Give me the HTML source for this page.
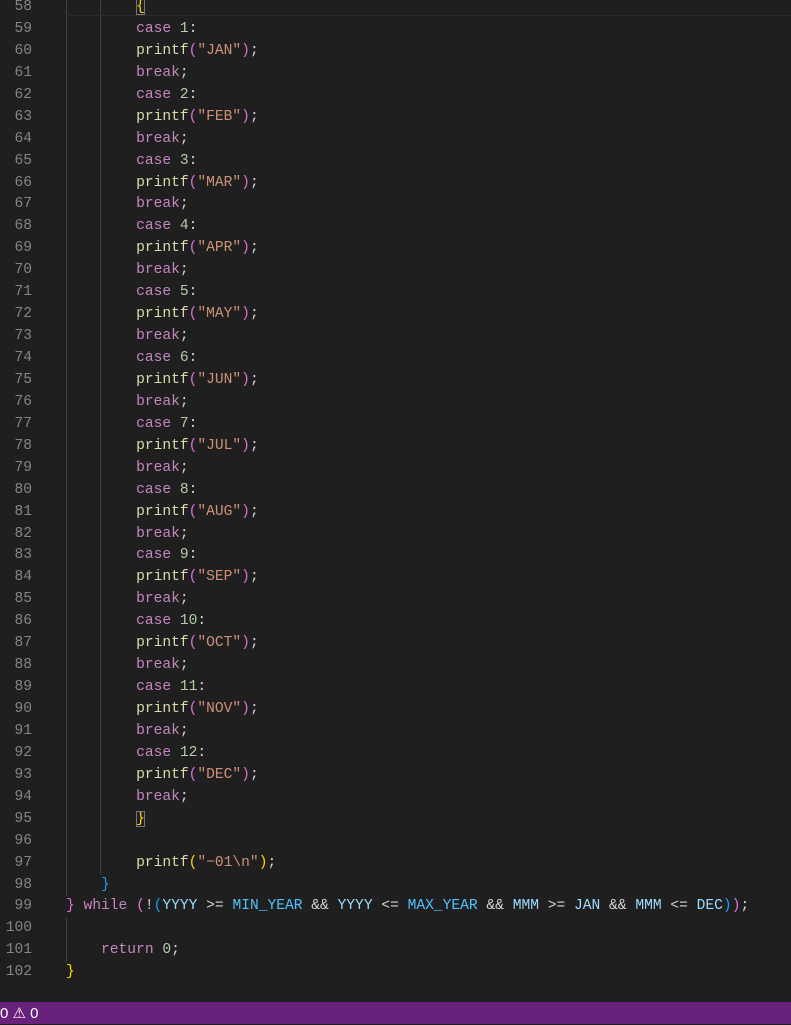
<!DOCTYPE html>
<html><head><meta charset="utf-8"><style>
body{margin:0;width:791px;height:1024px;background:#1f1f1f;overflow:hidden;position:relative;font-family:"Liberation Mono",monospace;font-size:14.6px}
#code{position:absolute;top:-3px;left:0;width:791px}
.l{height:21.95px;line-height:21.95px;position:relative;white-space:pre}
.n{position:absolute;right:759px;color:#858585;text-align:right}
.t{position:absolute;left:66px;color:#d4d4d4}
.g{position:absolute;top:0;width:1px;height:100%;background:#404040}
.k{color:#c586c0}.f{color:#dcdcaa}.s{color:#ce9178}.d{color:#b5cea8}.v{color:#9cdcfe}.c{color:#4fc1ff}.y{color:#ffd700}.p{color:#da70d6}.b{color:#179fff}
.box{outline:1px solid #777;outline-offset:-1px}
#st{position:absolute;left:0;top:1002px;width:791px;height:22px;background:#68217a;color:#fff;font-family:"Liberation Sans",sans-serif;font-size:15px;line-height:23px}
#sep{position:absolute;left:66px;top:15px;width:725px;height:1px;background:#2b2b2b}
</style></head><body>
<div id="code">
<div class="l"><span class="n">58</span><span class="g" style="left:66px"></span><span class="g" style="left:100px"></span><span class="t">        <span class="y box">{</span></span></div>
<div class="l"><span class="n">59</span><span class="g" style="left:66px"></span><span class="g" style="left:100px"></span><span class="t">        <span class="k">case</span> <span class="d">1</span>:</span></div>
<div class="l"><span class="n">60</span><span class="g" style="left:66px"></span><span class="g" style="left:100px"></span><span class="t">        <span class="f">printf</span><span class="p">(</span><span class="s">"JAN"</span><span class="p">)</span>;</span></div>
<div class="l"><span class="n">61</span><span class="g" style="left:66px"></span><span class="g" style="left:100px"></span><span class="t">        <span class="k">break</span>;</span></div>
<div class="l"><span class="n">62</span><span class="g" style="left:66px"></span><span class="g" style="left:100px"></span><span class="t">        <span class="k">case</span> <span class="d">2</span>:</span></div>
<div class="l"><span class="n">63</span><span class="g" style="left:66px"></span><span class="g" style="left:100px"></span><span class="t">        <span class="f">printf</span><span class="p">(</span><span class="s">"FEB"</span><span class="p">)</span>;</span></div>
<div class="l"><span class="n">64</span><span class="g" style="left:66px"></span><span class="g" style="left:100px"></span><span class="t">        <span class="k">break</span>;</span></div>
<div class="l"><span class="n">65</span><span class="g" style="left:66px"></span><span class="g" style="left:100px"></span><span class="t">        <span class="k">case</span> <span class="d">3</span>:</span></div>
<div class="l"><span class="n">66</span><span class="g" style="left:66px"></span><span class="g" style="left:100px"></span><span class="t">        <span class="f">printf</span><span class="p">(</span><span class="s">"MAR"</span><span class="p">)</span>;</span></div>
<div class="l"><span class="n">67</span><span class="g" style="left:66px"></span><span class="g" style="left:100px"></span><span class="t">        <span class="k">break</span>;</span></div>
<div class="l"><span class="n">68</span><span class="g" style="left:66px"></span><span class="g" style="left:100px"></span><span class="t">        <span class="k">case</span> <span class="d">4</span>:</span></div>
<div class="l"><span class="n">69</span><span class="g" style="left:66px"></span><span class="g" style="left:100px"></span><span class="t">        <span class="f">printf</span><span class="p">(</span><span class="s">"APR"</span><span class="p">)</span>;</span></div>
<div class="l"><span class="n">70</span><span class="g" style="left:66px"></span><span class="g" style="left:100px"></span><span class="t">        <span class="k">break</span>;</span></div>
<div class="l"><span class="n">71</span><span class="g" style="left:66px"></span><span class="g" style="left:100px"></span><span class="t">        <span class="k">case</span> <span class="d">5</span>:</span></div>
<div class="l"><span class="n">72</span><span class="g" style="left:66px"></span><span class="g" style="left:100px"></span><span class="t">        <span class="f">printf</span><span class="p">(</span><span class="s">"MAY"</span><span class="p">)</span>;</span></div>
<div class="l"><span class="n">73</span><span class="g" style="left:66px"></span><span class="g" style="left:100px"></span><span class="t">        <span class="k">break</span>;</span></div>
<div class="l"><span class="n">74</span><span class="g" style="left:66px"></span><span class="g" style="left:100px"></span><span class="t">        <span class="k">case</span> <span class="d">6</span>:</span></div>
<div class="l"><span class="n">75</span><span class="g" style="left:66px"></span><span class="g" style="left:100px"></span><span class="t">        <span class="f">printf</span><span class="p">(</span><span class="s">"JUN"</span><span class="p">)</span>;</span></div>
<div class="l"><span class="n">76</span><span class="g" style="left:66px"></span><span class="g" style="left:100px"></span><span class="t">        <span class="k">break</span>;</span></div>
<div class="l"><span class="n">77</span><span class="g" style="left:66px"></span><span class="g" style="left:100px"></span><span class="t">        <span class="k">case</span> <span class="d">7</span>:</span></div>
<div class="l"><span class="n">78</span><span class="g" style="left:66px"></span><span class="g" style="left:100px"></span><span class="t">        <span class="f">printf</span><span class="p">(</span><span class="s">"JUL"</span><span class="p">)</span>;</span></div>
<div class="l"><span class="n">79</span><span class="g" style="left:66px"></span><span class="g" style="left:100px"></span><span class="t">        <span class="k">break</span>;</span></div>
<div class="l"><span class="n">80</span><span class="g" style="left:66px"></span><span class="g" style="left:100px"></span><span class="t">        <span class="k">case</span> <span class="d">8</span>:</span></div>
<div class="l"><span class="n">81</span><span class="g" style="left:66px"></span><span class="g" style="left:100px"></span><span class="t">        <span class="f">printf</span><span class="p">(</span><span class="s">"AUG"</span><span class="p">)</span>;</span></div>
<div class="l"><span class="n">82</span><span class="g" style="left:66px"></span><span class="g" style="left:100px"></span><span class="t">        <span class="k">break</span>;</span></div>
<div class="l"><span class="n">83</span><span class="g" style="left:66px"></span><span class="g" style="left:100px"></span><span class="t">        <span class="k">case</span> <span class="d">9</span>:</span></div>
<div class="l"><span class="n">84</span><span class="g" style="left:66px"></span><span class="g" style="left:100px"></span><span class="t">        <span class="f">printf</span><span class="p">(</span><span class="s">"SEP"</span><span class="p">)</span>;</span></div>
<div class="l"><span class="n">85</span><span class="g" style="left:66px"></span><span class="g" style="left:100px"></span><span class="t">        <span class="k">break</span>;</span></div>
<div class="l"><span class="n">86</span><span class="g" style="left:66px"></span><span class="g" style="left:100px"></span><span class="t">        <span class="k">case</span> <span class="d">10</span>:</span></div>
<div class="l"><span class="n">87</span><span class="g" style="left:66px"></span><span class="g" style="left:100px"></span><span class="t">        <span class="f">printf</span><span class="p">(</span><span class="s">"OCT"</span><span class="p">)</span>;</span></div>
<div class="l"><span class="n">88</span><span class="g" style="left:66px"></span><span class="g" style="left:100px"></span><span class="t">        <span class="k">break</span>;</span></div>
<div class="l"><span class="n">89</span><span class="g" style="left:66px"></span><span class="g" style="left:100px"></span><span class="t">        <span class="k">case</span> <span class="d">11</span>:</span></div>
<div class="l"><span class="n">90</span><span class="g" style="left:66px"></span><span class="g" style="left:100px"></span><span class="t">        <span class="f">printf</span><span class="p">(</span><span class="s">"NOV"</span><span class="p">)</span>;</span></div>
<div class="l"><span class="n">91</span><span class="g" style="left:66px"></span><span class="g" style="left:100px"></span><span class="t">        <span class="k">break</span>;</span></div>
<div class="l"><span class="n">92</span><span class="g" style="left:66px"></span><span class="g" style="left:100px"></span><span class="t">        <span class="k">case</span> <span class="d">12</span>:</span></div>
<div class="l"><span class="n">93</span><span class="g" style="left:66px"></span><span class="g" style="left:100px"></span><span class="t">        <span class="f">printf</span><span class="p">(</span><span class="s">"DEC"</span><span class="p">)</span>;</span></div>
<div class="l"><span class="n">94</span><span class="g" style="left:66px"></span><span class="g" style="left:100px"></span><span class="t">        <span class="k">break</span>;</span></div>
<div class="l"><span class="n">95</span><span class="g" style="left:66px"></span><span class="g" style="left:100px"></span><span class="t">        <span class="y box">}</span></span></div>
<div class="l"><span class="n">96</span><span class="g" style="left:66px"></span><span class="g" style="left:100px"></span></div>
<div class="l"><span class="n">97</span><span class="g" style="left:66px"></span><span class="g" style="left:100px"></span><span class="t">        <span class="f">printf</span><span class="y">(</span><span class="s">"−01\n"</span><span class="y">)</span>;</span></div>
<div class="l"><span class="n">98</span><span class="g" style="left:66px"></span><span class="t">    <span class="b">}</span></span></div>
<div class="l"><span class="n">99</span><span class="t"><span class="p">}</span> <span class="k">while</span> <span class="p">(</span>!<span class="b">(</span><span class="v">YYYY</span> &gt;= <span class="c">MIN_YEAR</span> &amp;&amp; <span class="v">YYYY</span> &lt;= <span class="c">MAX_YEAR</span> &amp;&amp; <span class="v">MMM</span> &gt;= <span class="v">JAN</span> &amp;&amp; <span class="v">MMM</span> &lt;= <span class="v">DEC</span><span class="b">)</span><span class="p">)</span>;</span></div>
<div class="l"><span class="n">100</span><span class="g" style="left:66px"></span></div>
<div class="l"><span class="n">101</span><span class="g" style="left:66px"></span><span class="t">    <span class="k">return</span> <span class="d">0</span>;</span></div>
<div class="l"><span class="n">102</span><span class="t"><span class="y">}</span></span></div>
</div>
<div id="sep"></div>
<div id="st">0 <span style="font-size:15px">⚠</span> 0</div>
</body></html>
